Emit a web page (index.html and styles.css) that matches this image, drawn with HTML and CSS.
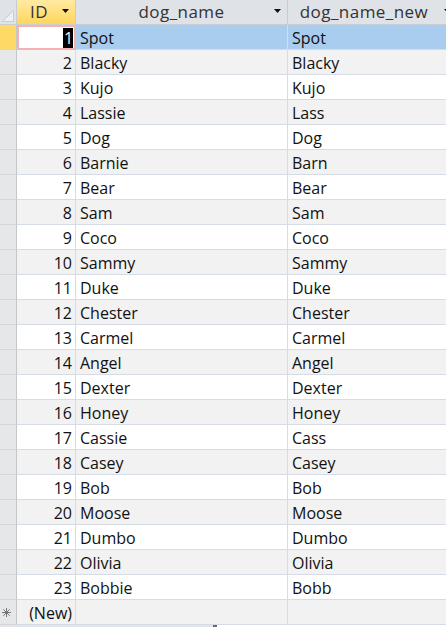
FILE: index.html
```html
<!DOCTYPE html>
<html>
<head>
<meta charset="utf-8">
<link rel="stylesheet" href="styles.css">
</head>
<body>
<div class="sheet">
  <div class="row head">
    <div class="cell sel-head">
      <svg class="selall" width="12" height="12" viewBox="0 0 12 12"><polygon points="0.5,11.5 11.5,11.5 11.5,0.5" fill="#eef0f2" stroke="#c9ccd1" stroke-width="1"/></svg>
    </div>
    <div class="cell hcell hid"><span class="htext">ID</span><svg class="arrow" width="7" height="5" viewBox="0 0 7 5"><polygon points="0,0 7,0 3.5,4" fill="#111"/></svg></div>
    <div class="cell hcell hname"><span class="htext">dog_name</span><svg class="arrow" width="7" height="5" viewBox="0 0 7 5"><polygon points="0,0 7,0 3.5,4" fill="#111"/></svg></div>
    <div class="cell hcell hnew"><span class="htext">dog_name_new</span><svg class="arrow" width="7" height="5" viewBox="0 0 7 5"><polygon points="0,0 7,0 3.5,4" fill="#111"/></svg></div>
  </div>

  <div class="row current">
    <div class="cell sel sel-current"></div>
    <div class="cell id id-current"><span class="caret">1</span></div>
    <div class="cell name picked">Spot</div>
    <div class="cell name picked">Spot</div>
  </div>
  <div class="row alt"><div class="cell sel"></div><div class="cell id">2</div><div class="cell name">Blacky</div><div class="cell name">Blacky</div></div>
  <div class="row"><div class="cell sel"></div><div class="cell id">3</div><div class="cell name">Kujo</div><div class="cell name">Kujo</div></div>
  <div class="row alt"><div class="cell sel"></div><div class="cell id">4</div><div class="cell name">Lassie</div><div class="cell name">Lass</div></div>
  <div class="row"><div class="cell sel"></div><div class="cell id">5</div><div class="cell name">Dog</div><div class="cell name">Dog</div></div>
  <div class="row alt"><div class="cell sel"></div><div class="cell id">6</div><div class="cell name">Barnie</div><div class="cell name">Barn</div></div>
  <div class="row"><div class="cell sel"></div><div class="cell id">7</div><div class="cell name">Bear</div><div class="cell name">Bear</div></div>
  <div class="row alt"><div class="cell sel"></div><div class="cell id">8</div><div class="cell name">Sam</div><div class="cell name">Sam</div></div>
  <div class="row"><div class="cell sel"></div><div class="cell id">9</div><div class="cell name">Coco</div><div class="cell name">Coco</div></div>
  <div class="row alt"><div class="cell sel"></div><div class="cell id">10</div><div class="cell name">Sammy</div><div class="cell name">Sammy</div></div>
  <div class="row"><div class="cell sel"></div><div class="cell id">11</div><div class="cell name">Duke</div><div class="cell name">Duke</div></div>
  <div class="row alt"><div class="cell sel"></div><div class="cell id">12</div><div class="cell name">Chester</div><div class="cell name">Chester</div></div>
  <div class="row"><div class="cell sel"></div><div class="cell id">13</div><div class="cell name">Carmel</div><div class="cell name">Carmel</div></div>
  <div class="row alt"><div class="cell sel"></div><div class="cell id">14</div><div class="cell name">Angel</div><div class="cell name">Angel</div></div>
  <div class="row"><div class="cell sel"></div><div class="cell id">15</div><div class="cell name">Dexter</div><div class="cell name">Dexter</div></div>
  <div class="row alt"><div class="cell sel"></div><div class="cell id">16</div><div class="cell name">Honey</div><div class="cell name">Honey</div></div>
  <div class="row"><div class="cell sel"></div><div class="cell id">17</div><div class="cell name">Cassie</div><div class="cell name">Cass</div></div>
  <div class="row alt"><div class="cell sel"></div><div class="cell id">18</div><div class="cell name">Casey</div><div class="cell name">Casey</div></div>
  <div class="row"><div class="cell sel"></div><div class="cell id">19</div><div class="cell name">Bob</div><div class="cell name">Bob</div></div>
  <div class="row alt"><div class="cell sel"></div><div class="cell id">20</div><div class="cell name">Moose</div><div class="cell name">Moose</div></div>
  <div class="row"><div class="cell sel"></div><div class="cell id">21</div><div class="cell name">Dumbo</div><div class="cell name">Dumbo</div></div>
  <div class="row alt"><div class="cell sel"></div><div class="cell id">22</div><div class="cell name">Olivia</div><div class="cell name">Olivia</div></div>
  <div class="row"><div class="cell sel"></div><div class="cell id">23</div><div class="cell name">Bobbie</div><div class="cell name">Bobb</div></div>
  <div class="row alt newrow">
    <div class="cell sel sel-new">
      <svg class="star" width="9" height="9" viewBox="0 0 9 9"><g stroke="#6a6a6a" stroke-width="0.9"><line x1="4.5" y1="0" x2="4.5" y2="9"/><line x1="0" y1="4.5" x2="9" y2="4.5"/><line x1="1.3" y1="1.3" x2="7.7" y2="7.7"/><line x1="7.7" y1="1.3" x2="1.3" y2="7.7"/></g></svg>
    </div>
    <div class="cell id">(New)</div>
    <div class="cell name"></div>
    <div class="cell name"></div>
  </div>
  <div class="footer"><div class="footbar"></div><div class="footmark"></div></div>
</div>
</body>
</html>
```

FILE: styles.css
```css
html, body {
  margin: 0;
  padding: 0;
  background: #ffffff;
  overflow: hidden;
}

.sheet {
  width: 458px;
  font-family: "Open Sans", "Noto Sans", sans-serif;
  font-size: 16px;
  color: #111111;
}

.row {
  display: grid;
  grid-template-columns: 17px 59px 212px 170px;
  height: 25px;
  background: #ffffff;
}

.row.alt {
  background: #f2f2f2;
}

.cell {
  box-sizing: border-box;
  height: 25px;
  border-right: 1px solid #d5dce5;
  border-bottom: 1px solid #d5dce5;
  line-height: 24px;
  padding-top: 1px;
  white-space: nowrap;
  overflow: hidden;
}

.sel {
  background: #e6e7e9;
  border-right-color: #c3c7cc;
  border-bottom-color: #d3d6da;
  display: flex;
  align-items: center;
  justify-content: center;
  padding-top: 0;
}

.sel-current {
  background: #ffd966;
}

.sel-new .star {
  display: block;
  margin-left: -3px;
  margin-top: 1px;
}

.id {
  text-align: right;
  padding-right: 3px;
}

.name {
  padding-left: 4px;
}

.picked {
  background: #a8cdee;
}

.id-current {
  background: #ffffff;
  outline: 2px solid #f5b2b2;
  outline-offset: -2px;
  position: relative;
  padding-right: 2px;
}

.caret {
  display: inline-block;
  background: #000000;
  color: #e8f6ff;
  line-height: 21px;
  padding: 0 1px 0 1px;
  width: 8px;
  text-align: center;
}

/* header */
.head {
  background: #dfe2e6;
}

.head .cell {
  height: 25px;
  border-bottom: 1px solid #c9ced4;
  border-right: 1px solid #c8ccd2;
  padding-top: 0;
}

.sel-head {
  background: #dfe2e6;
  display: flex;
  align-items: flex-end;
  justify-content: flex-end;
}

.selall {
  display: block;
  margin-right: 2px;
  margin-bottom: 2px;
}

.hcell {
  display: flex;
  align-items: center;
  justify-content: center;
  position: relative;
  color: #333333;
  font-size: 17px;
  letter-spacing: 0.45px;
  line-height: 24px;
}

.hid {
  background: linear-gradient(#ffeaa2, #ffd65c);
  padding-right: 14px;
}

.hname {
  padding-right: 0;
}

.hnew {
  padding-right: 17px;
}

.htext {
  display: block;
}

.arrow {
  position: absolute;
  right: 6px;
  top: 9px;
  display: block;
}

/* footer strip */
.footer {
  display: flex;
  height: 2px;
}

.footbar {
  width: 213px;
  background: #e3e4e6;
}

.footmark {
  width: 4px;
  background: #6b6b6b;
}
```
